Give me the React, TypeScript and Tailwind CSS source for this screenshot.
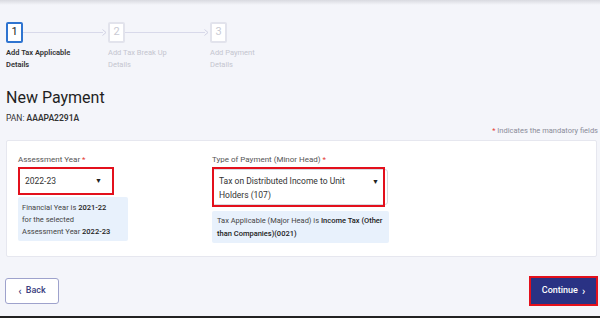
export default function App() {
  const steps = [
    { n: "1", l1: "Add Tax Applicable", l2: "Details", active: true },
    { n: "2", l1: "Add Tax Break Up", l2: "Details", active: false },
    { n: "3", l1: "Add Payment", l2: "Details", active: false },
  ];

  return (
    <div
      className="flex h-[318px] w-[600px] flex-col overflow-hidden bg-[#f4f5fa] text-[#222]"
      style={{ fontFamily: "Roboto, 'Liberation Sans', sans-serif" }}
    >
      {/* Top shadow */}
      <div className="h-[5px] bg-gradient-to-b from-[#d9dae0] to-[#f4f5fa]"></div>

      {/* Stepper */}
      <div className="mt-[17px] flex pl-[6px]">
        {steps.map((s, i) => (
          <div key={s.n} className="w-[102px]">
            <div className="flex items-center">
              <div
                className={
                  s.active
                    ? "flex h-[21px] w-[17px] items-center justify-center rounded-[2px] border-2 border-[#2f74d0] bg-white text-[11px] text-[#222]"
                    : "flex h-[21px] w-[17px] items-center justify-center rounded-[2px] border-2 border-[#e2e3ec] bg-white text-[11px] text-[#c9cad4]"
                }
              >
                {s.n}
              </div>
              {i < 2 && (
                <div className="flex flex-1 items-center pr-[1px]">
                  <div className="h-px flex-1 bg-[#d8d9ea]"></div>
                  <svg width="5" height="7" viewBox="0 0 5 7" className="-ml-[1px]">
                    <path d="M0.5 0.5 L4 3.5 L0.5 6.5" fill="none" stroke="#d0d1e4" strokeWidth="1" />
                  </svg>
                </div>
              )}
            </div>
            <div
              className={
                s.active
                  ? "mt-[4px] text-[7.5px] font-semibold leading-[12px] text-[#333]"
                  : "mt-[4px] text-[7.5px] leading-[12px] text-[#c4c5cf]"
              }
            >
              <div>{s.l1}</div>
              <div>{s.l2}</div>
            </div>
          </div>
        ))}
      </div>

      {/* Title */}
      <div className="mt-[15px] pl-[6px] text-[16px] leading-[24px] text-[#1f1f1f]">
        New Payment
      </div>
      <div className="mt-[2px] pl-[6px] text-[8.5px] leading-[12px] text-[#333]">
        PAN: <span className="font-semibold">AAAPA2291A</span>
      </div>
      <div className="mt-[1px] pr-[2px] text-right text-[7.5px] leading-[12px] text-[#8a8c99]">
        <span className="text-[#e53935]">*</span> Indicates the mandatory fields
      </div>

      {/* Card */}
      <div className="mx-[6px] mt-[3px] mr-[3px] flex h-[117px] rounded-[2px] border border-[#e6e7ef] bg-white pl-[11px] pt-[13px]">
        {/* Assessment Year */}
        <div className="w-[194px]">
          <div className="text-[8px] leading-[12px] text-[#555]">
            Assessment Year <span className="text-[#e53935]">*</span>
          </div>
          <div className="mt-[1px] flex h-[28px] w-[96px] items-center justify-between border-2 border-[#e3101c] bg-white pl-[5px] pr-[10px] text-[8.5px] text-[#333]">
            <span>2022-23</span>
            <span className="text-[7px] text-[#222]">▼</span>
          </div>
          <div className="mt-[2px] h-[44px] w-[110px] rounded-[2px] bg-[#e8f1fc] px-[4px] pt-[5px] text-[7.5px] leading-[12px] text-[#444]">
            <div>
              Financial Year is <span className="font-medium text-[#222]">2021-22</span>
            </div>
            <div>for the selected</div>
            <div>
              Assessment Year <span className="font-medium text-[#222]">2022-23</span>
            </div>
          </div>
        </div>

        {/* Type of Payment */}
        <div className="w-[177px]">
          <div className="text-[8px] leading-[12px] text-[#555]">
            Type of Payment (Minor Head) <span className="text-[#e53935]">*</span>
          </div>
          <div className="relative mt-[1px] h-[40px] w-[176px]">
            <div className="absolute inset-y-[2px] left-0 right-0 rounded-[3px] border border-[#d8d9e0]"></div>
            <div className="relative flex h-[40px] w-[173px] items-start justify-between border-2 border-[#e3101c] pl-[5px] pr-[4px] pt-[5px] text-[8.5px] leading-[14px] text-[#333]">
              <span className="whitespace-nowrap">
                Tax on Distributed Income to Unit
                <br />
                Holders (107)
              </span>
              <span className="mt-[1px] text-[7px] text-[#222]">▼</span>
            </div>
          </div>
          <div className="mt-[4px] h-[32px] whitespace-nowrap rounded-[2px] bg-[#e8f1fc] px-[5px] pt-[3px] text-[7.5px] leading-[13px] text-[#444]">
            Tax Applicable (Major Head) is{" "}
            <span className="font-medium text-[#222]">Income Tax (Other</span>
            <br />
            <span className="font-medium text-[#222]">than Companies)(0021)</span>
          </div>
        </div>
      </div>

      {/* Buttons */}
      <div className="mt-[19px] flex items-center justify-between pl-[5px] pr-[2px]">
        <button className="flex h-[26px] w-[54px] items-center justify-center gap-[4px] rounded-[3px] border border-[#9ea2cc] bg-white text-[9px] font-medium text-[#3b4080]">
          <span className="text-[11px] leading-none">‹</span>
          <span>Back</span>
        </button>
        <div className="border-2 border-[#e3101c]">
          <button className="flex h-[26px] w-[65px] items-center justify-center gap-[4px] bg-[#2a3284] text-[9px] font-medium text-white">
            <span>Continue</span>
            <span className="text-[11px] leading-none">›</span>
          </button>
        </div>
      </div>

      {/* Bottom bar */}
      <div className="mt-auto h-[2px] bg-[#222]"></div>
    </div>
  );
}
